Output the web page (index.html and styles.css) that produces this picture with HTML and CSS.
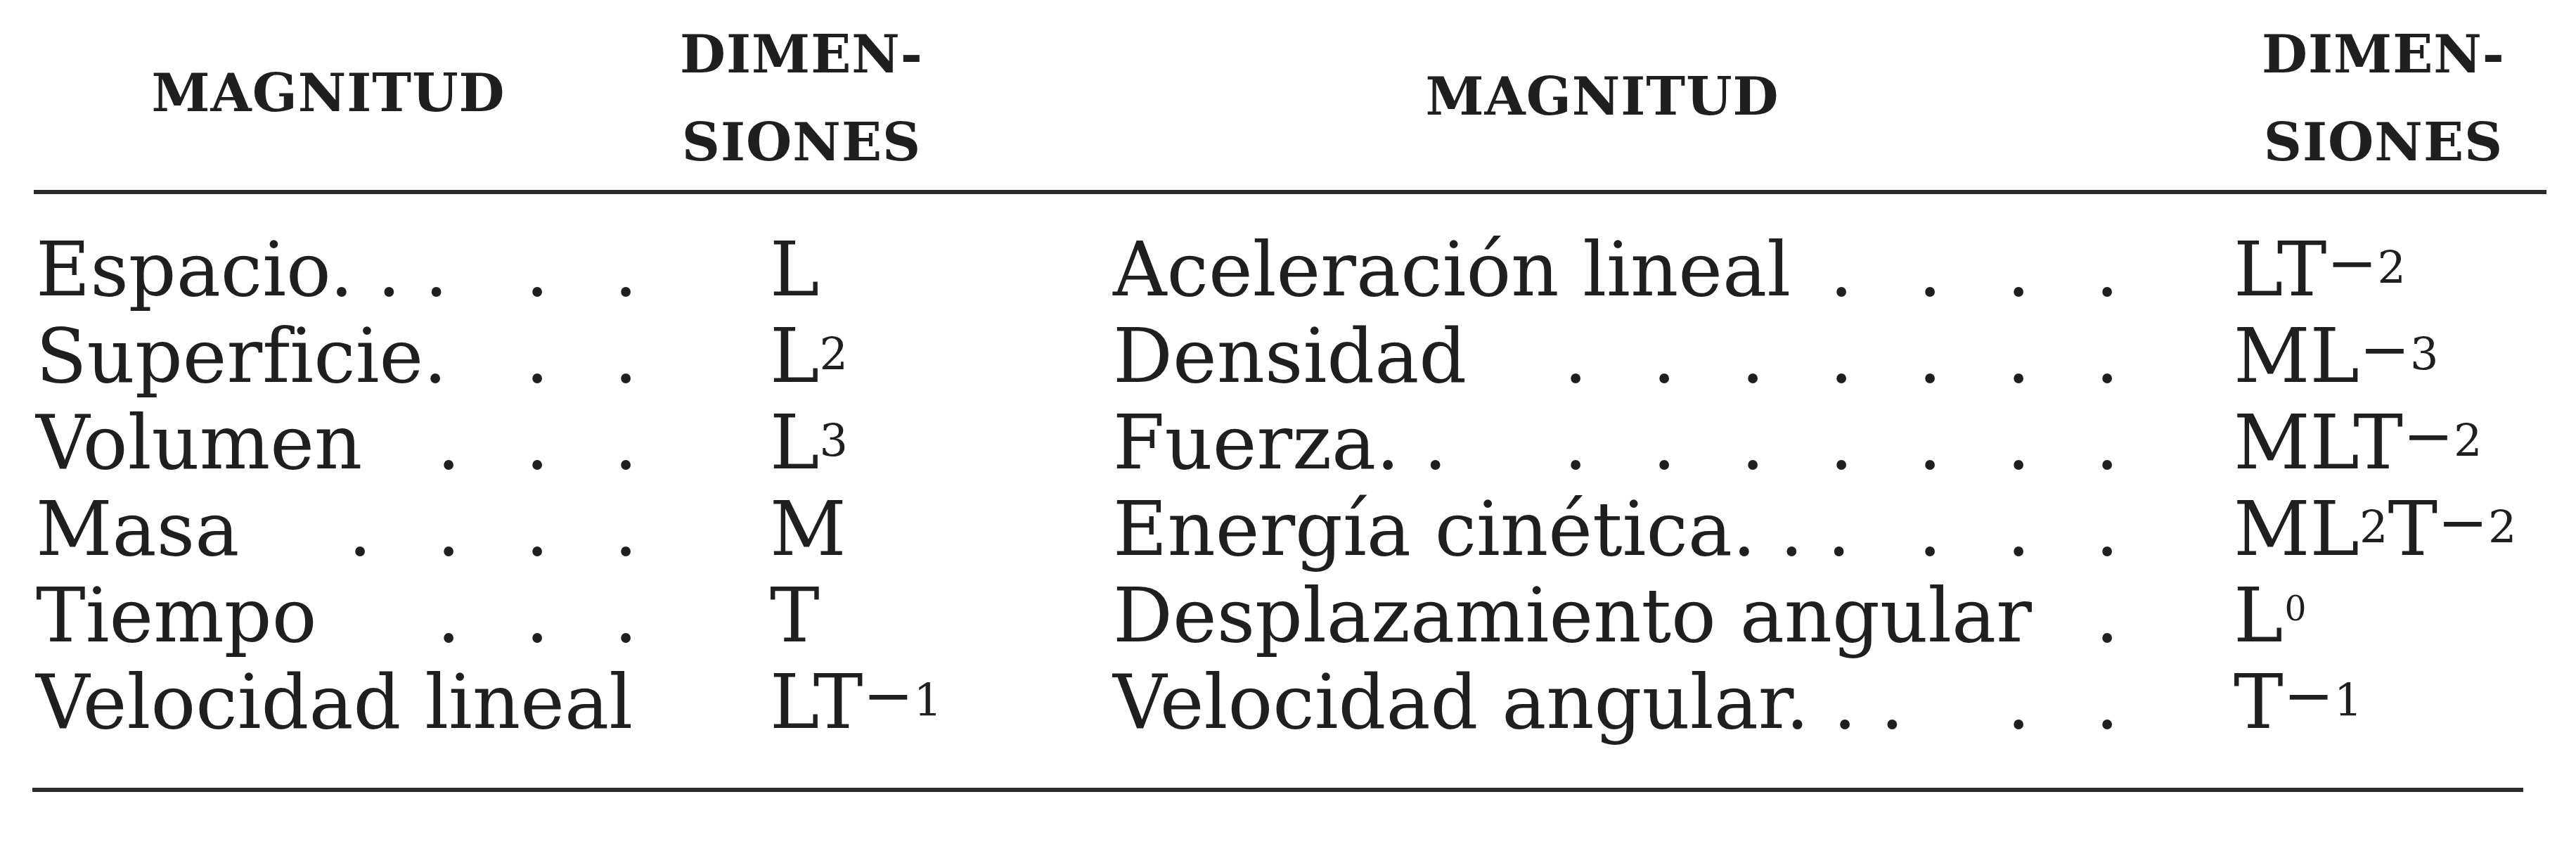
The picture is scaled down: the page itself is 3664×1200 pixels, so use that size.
FILE: index.html
```html
<!DOCTYPE html>
<html lang="es">
<head>
<meta charset="utf-8">
<title>Magnitudes y dimensiones</title>
<link rel="stylesheet" href="styles.css">
</head>
<body>
<div class="table">
  <div class="head">
    <div class="h h-mag1">Magnitud</div>
    <div class="h h-dim1">Dimen-<br>siones</div>
    <div class="h h-mag2">Magnitud</div>
    <div class="h h-dim2">Dimen-<br>siones</div>
  </div>
  <div class="rule rule-top"></div>
  <div class="body">
    <div class="c lab1"><span class="t">Espacio. . .</span><span class="lead"><i>.</i><i>.</i></span></div>
    <div class="c dim1">L</div>
    <div class="c lab2"><span class="t">Aceleración lineal</span><span class="lead"><i>.</i><i>.</i><i>.</i><i>.</i></span></div>
    <div class="c dim2">LT<span class="sup"><span class="minus">−</span>2</span></div>

    <div class="c lab1"><span class="t">Superficie.</span><span class="lead"><i>.</i><i>.</i></span></div>
    <div class="c dim1">L<span class="sup">2</span></div>
    <div class="c lab2"><span class="t">Densidad</span><span class="lead"><i>.</i><i>.</i><i>.</i><i>.</i><i>.</i><i>.</i><i>.</i></span></div>
    <div class="c dim2">ML<span class="sup"><span class="minus">−</span>3</span></div>

    <div class="c lab1"><span class="t">Volumen</span><span class="lead"><i>.</i><i>.</i><i>.</i></span></div>
    <div class="c dim1">L<span class="sup">3</span></div>
    <div class="c lab2"><span class="t">Fuerza. .</span><span class="lead"><i>.</i><i>.</i><i>.</i><i>.</i><i>.</i><i>.</i><i>.</i></span></div>
    <div class="c dim2">MLT<span class="sup"><span class="minus">−</span>2</span></div>

    <div class="c lab1"><span class="t">Masa</span><span class="lead"><i>.</i><i>.</i><i>.</i><i>.</i></span></div>
    <div class="c dim1">M</div>
    <div class="c lab2"><span class="t">Energía cinética. . .</span><span class="lead"><i>.</i><i>.</i><i>.</i></span></div>
    <div class="c dim2">ML<span class="sup">2</span>T<span class="sup"><span class="minus">−</span>2</span></div>

    <div class="c lab1"><span class="t">Tiempo</span><span class="lead"><i>.</i><i>.</i><i>.</i></span></div>
    <div class="c dim1">T</div>
    <div class="c lab2"><span class="t">Desplazamiento angular</span><span class="lead"><i>.</i></span></div>
    <div class="c dim2">L<span class="sup zero">0</span></div>

    <div class="c lab1"><span class="t">Velocidad lineal</span><span class="lead"></span></div>
    <div class="c dim1">LT<span class="sup"><span class="minus">−</span>1</span></div>
    <div class="c lab2"><span class="t">Velocidad angular. . .</span><span class="lead"><i>.</i><i>.</i></span></div>
    <div class="c dim2">T<span class="sup"><span class="minus">−</span>1</span></div>
  </div>
  <div class="rule rule-bottom"></div>
</div>
</body>
</html>
```

FILE: styles.css
```css
html, body {
  margin: 0;
  padding: 0;
  background: #ffffff;
}

body {
  width: 3664px;
  height: 1200px;
  overflow: hidden;
  color: #1f1f1f;
  font-family: "DejaVu Serif", "Liberation Serif", serif;
}

.table {
  margin-left: 48px;
  padding-top: 15px;
  width: 3574px;
}

.head,
.body {
  display: grid;
  grid-template-columns: 912px 623px 1577px 460px;
}

.head {
  align-items: center;
}

.h {
  font-size: 75px;
  line-height: 125px;
  font-weight: bold;
  text-transform: uppercase;
  letter-spacing: 1px;
  text-align: center;
  white-space: nowrap;
}

.h-mag1 { padding-left: 3px; padding-right: 77px; padding-bottom: 16px; }
.h-dim1 { padding-right: 263px; }
.h-mag2 { padding-right: 185px; padding-bottom: 6px; }
.h-dim2 { padding-right: 0; }

.rule {
  background: #2b2b2b;
  height: 6px;
}

.rule-top {
  margin-top: 5px;
  width: 3574px;
}

.rule-bottom {
  margin-top: 60px;
  width: 3543px;
  margin-left: -2px;
}

.body {
  margin-top: 46px;
  font-size: 106px;
  line-height: 123px;
}

.c {
  white-space: nowrap;
}

.lab1,
.lab2 {
  display: flex;
}

.lab1 {
  padding-left: 3px;
  padding-right: 53px;
}

.lab2 {
  padding-right: 146px;
}

.t {
  flex: none;
}

.lead {
  flex: 1;
  display: flex;
  justify-content: flex-end;
  overflow: hidden;
}

.lead i {
  font-style: normal;
  flex: none;
  width: 126px;
  text-align: right;
}

.dim1 {
  padding-left: 135px;
}

.dim2 {
  padding-left: 17px;
}

.sup {
  font-size: 0.6em;
  vertical-align: 17px;
  line-height: 0;
}

.minus {
  font-size: 1.35em;
}

.sup.zero {
  font-size: 0.46em;
  vertical-align: 30px;
  margin-left: 2px;
}
```
